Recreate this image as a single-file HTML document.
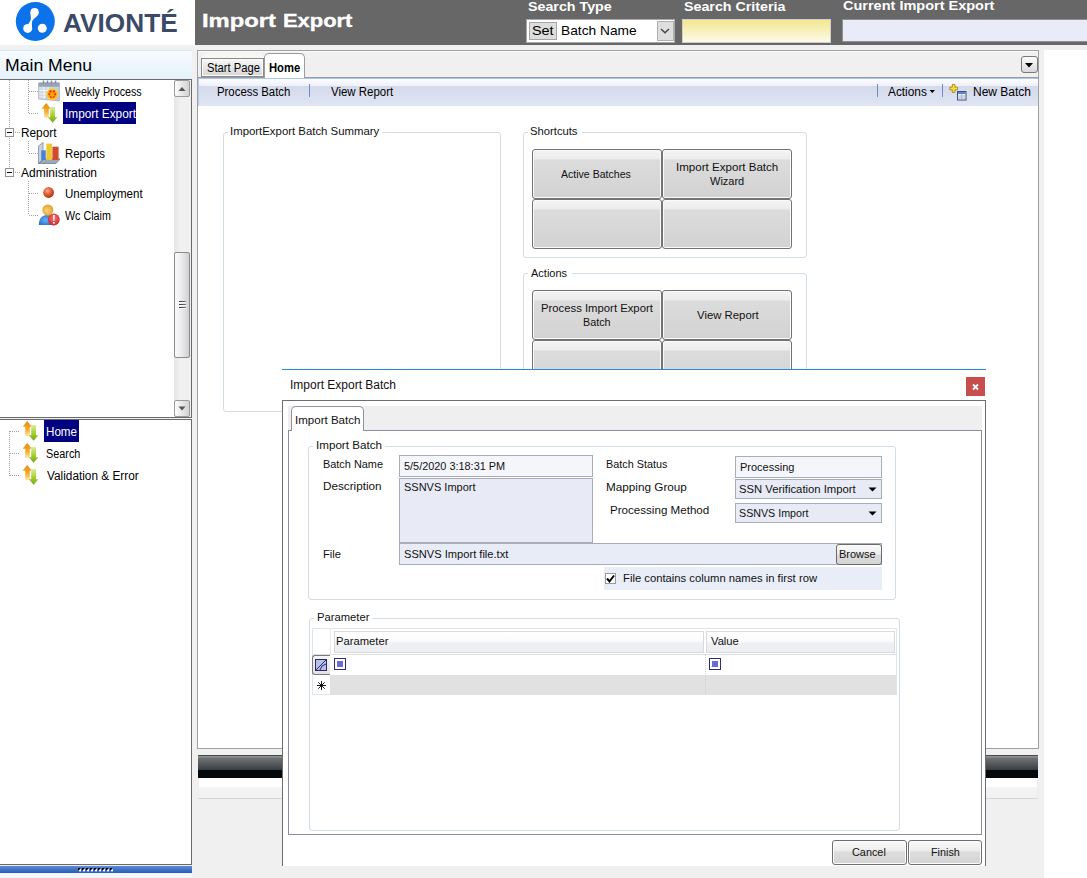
<!DOCTYPE html>
<html><head><meta charset="utf-8"><style>
html,body{margin:0;padding:0}
body{width:1087px;height:878px;overflow:hidden;position:relative;background:#f0f0f0;font-family:"Liberation Sans",sans-serif}
body>div{position:absolute}
.t{white-space:pre}
</style></head><body>
<div style="left:0px;top:0px;width:195px;height:45px;background:#fff"></div>
<div style="left:195px;top:0px;width:892px;height:45px;background:#676767"></div>
<div style="left:1044px;top:50px;width:43px;height:828px;background:#fff"></div>
<svg style="position:absolute;left:0;top:0" width="195" height="45" viewBox="0 0 195 45">
<circle cx="35.3" cy="21.4" r="19.5" fill="#0b72ea"/>
<path d="M30.4,12 C30.4,16 31.2,17.5 30.8,19.5 C30.5,21.5 27.5,23.5 27.7,28.4 L32,27 C31.7,22.5 32,20.5 34,18.8 C36,17.2 38.7,15.5 38.7,12 Z" fill="#fff"/>
<circle cx="34.6" cy="12.1" r="4.1" fill="#fff"/>
<circle cx="27.7" cy="28.4" r="4.5" fill="#fff"/>
<circle cx="42.3" cy="28.2" r="4.5" fill="#fff"/>
</svg>
<div style="left:526px;top:19px;width:149px;height:24px;background:#fff;border:1px solid #a9a9a9;box-sizing:border-box"></div>
<div style="left:529px;top:22px;width:28px;height:18px;background:#dddddd;border:1px solid #a6a6a6;box-sizing:border-box"></div>
<div style="left:657px;top:21px;width:17px;height:20px;background:#dedede;border:1px solid #b0b0b0;box-sizing:border-box"></div>
<svg style="position:absolute;left:657px;top:21px" width="17" height="20"><path d="M4,8 L8,11.8 L12,8" stroke="#444" stroke-width="1.4" fill="none"/></svg>
<div style="left:682px;top:19px;width:149px;height:24px;background:linear-gradient(#f2e68e,#fcfaea);border:1px solid #cfcfcf;box-sizing:border-box"></div>
<div style="left:842px;top:19px;width:245px;height:23px;background:#e9ecf8;border:1px solid #8f8f8f;border-right:none;box-sizing:border-box"></div>
<div style="left:0px;top:50px;width:192px;height:29px;background:linear-gradient(#f7fbfe,#e4f2fb);border-top:1px solid #d2ebf6;box-sizing:border-box"></div>
<div style="left:0px;top:79px;width:192px;height:339px;background:#fff;border-top:1px solid #6a6a6a;border-right:1px solid #6a6a6a;border-bottom:1px solid #6a6a6a;box-sizing:border-box"></div>
<div style="left:174px;top:80px;width:17px;height:337px;background:linear-gradient(90deg,#e6e6e6,#f0f0f0 40%,#f0f0f0)"></div>
<div style="left:174px;top:80px;width:16px;height:17px;background:linear-gradient(90deg,#fdfdfd,#e8e8e8 50%,#d2d2d2);border:1px solid #9a9a9a;border-radius:2px;box-sizing:border-box"></div>
<svg style="position:absolute;left:174px;top:80px" width="16" height="17"><path d="M4.5,11 L8,7 L11.5,11 Z" fill="#555"/></svg>
<div style="left:174px;top:400px;width:16px;height:17px;background:linear-gradient(90deg,#fdfdfd,#e8e8e8 50%,#d2d2d2);border:1px solid #9a9a9a;border-radius:2px;box-sizing:border-box"></div>
<svg style="position:absolute;left:174px;top:400px" width="16" height="17"><path d="M4.5,6.5 L8,10.5 L11.5,6.5 Z" fill="#555"/></svg>
<div style="left:174px;top:252px;width:16px;height:106px;background:linear-gradient(90deg,#fbfbfb,#ececec 45%,#cfd0d4);border:1px solid #8a8a8a;border-radius:2px;box-sizing:border-box"></div>
<div style="left:179px;top:301px;width:7px;height:1px;background:linear-gradient(90deg,#333,#777)"></div>
<div style="left:179px;top:302px;width:7px;height:1px;background:#fafafa"></div>
<div style="left:179px;top:304px;width:7px;height:1px;background:linear-gradient(90deg,#333,#777)"></div>
<div style="left:179px;top:305px;width:7px;height:1px;background:#fafafa"></div>
<div style="left:179px;top:307px;width:7px;height:1px;background:linear-gradient(90deg,#333,#777)"></div>
<div style="left:179px;top:308px;width:7px;height:1px;background:#fafafa"></div>
<div style="left:9px;top:80px;width:1px;height:48px;background:repeating-linear-gradient(#a0a0a0 0 1px,transparent 1px 2px)"></div>
<div style="left:9px;top:138px;width:1px;height:30px;background:repeating-linear-gradient(#a0a0a0 0 1px,transparent 1px 2px)"></div>
<div style="left:28px;top:80px;width:1px;height:33px;background:repeating-linear-gradient(#a0a0a0 0 1px,transparent 1px 2px)"></div>
<div style="left:29px;top:91px;width:9px;height:1px;background:repeating-linear-gradient(90deg,#a0a0a0 0 1px,transparent 1px 2px)"></div>
<div style="left:29px;top:113px;width:9px;height:1px;background:repeating-linear-gradient(90deg,#a0a0a0 0 1px,transparent 1px 2px)"></div>
<div style="left:28px;top:141px;width:1px;height:12px;background:repeating-linear-gradient(#a0a0a0 0 1px,transparent 1px 2px)"></div>
<div style="left:29px;top:153px;width:9px;height:1px;background:repeating-linear-gradient(90deg,#a0a0a0 0 1px,transparent 1px 2px)"></div>
<div style="left:28px;top:181px;width:1px;height:34px;background:repeating-linear-gradient(#a0a0a0 0 1px,transparent 1px 2px)"></div>
<div style="left:29px;top:193px;width:9px;height:1px;background:repeating-linear-gradient(90deg,#a0a0a0 0 1px,transparent 1px 2px)"></div>
<div style="left:29px;top:215px;width:9px;height:1px;background:repeating-linear-gradient(90deg,#a0a0a0 0 1px,transparent 1px 2px)"></div>
<div style="left:5px;top:128px;width:9px;height:9px;background:#fff;border:1px solid #919191;box-sizing:border-box"></div>
<div style="left:7px;top:132px;width:5px;height:1px;background:#000"></div>
<div style="left:15px;top:132px;width:5px;height:1px;background:repeating-linear-gradient(90deg,#a0a0a0 0 1px,transparent 1px 2px)"></div>
<div style="left:5px;top:168px;width:9px;height:9px;background:#fff;border:1px solid #919191;box-sizing:border-box"></div>
<div style="left:7px;top:172px;width:5px;height:1px;background:#000"></div>
<div style="left:15px;top:172px;width:5px;height:1px;background:repeating-linear-gradient(90deg,#a0a0a0 0 1px,transparent 1px 2px)"></div>
<svg style="position:absolute;left:38px;top:80px" width="22" height="22" viewBox="0 0 22 22">
<defs><linearGradient id="cal" x1="0" y1="0" x2="1" y2="1"><stop offset="0" stop-color="#dfe4ea"/><stop offset="1" stop-color="#b4becb"/></linearGradient>
<radialGradient id="sun" cx="0.5" cy="0.5" r="0.5"><stop offset="0" stop-color="#ffb000"/><stop offset="0.6" stop-color="#ff9a10"/><stop offset="1" stop-color="#f8dc20"/></radialGradient></defs>
<path d="M0.5,3 L21.5,3 L21.5,21 L0.5,19 Z" fill="url(#cal)" stroke="#9aa6b6" stroke-width="0.6"/>
<rect x="0.8" y="2.5" width="20.5" height="4.2" fill="#96a3b6"/>
<path d="M5.5,0.5 V4 M9.5,0.5 V4 M13.5,0.5 V4 M17.5,0.5 V4" stroke="#8592a6" stroke-width="1.6"/>
<path d="M1.5,10.5 H13 M1.5,14 H8 M1.5,17 H8 M6,7 V19 M10,7 V10" stroke="#f4f6f9" stroke-width="1"/>
<circle cx="14.3" cy="14.3" r="5.8" fill="url(#sun)"/>
<circle cx="12.5" cy="11.4" r="1.1" fill="#f02808"/><circle cx="15.9" cy="11.4" r="1.1" fill="#f02808"/>
<circle cx="11.3" cy="14.3" r="1.1" fill="#f02808"/><circle cx="17.2" cy="14.3" r="1.1" fill="#f02808"/>
<circle cx="12.8" cy="17" r="1.1" fill="#f84818"/><circle cx="15.7" cy="17" r="1.1" fill="#f84818"/>
</svg>
<svg style="position:absolute;left:41px;top:103px" width="18" height="21" viewBox="0 0 18 21">
<defs><linearGradient id="ga41_103" x1="0" y1="0" x2="0" y2="1"><stop offset="0" stop-color="#e88a10"/><stop offset="0.6" stop-color="#f5b030"/><stop offset="1" stop-color="#fde8b0"/></linearGradient>
<linearGradient id="gb41_103" x1="0" y1="0" x2="0" y2="1"><stop offset="0" stop-color="#d8f0a0"/><stop offset="0.5" stop-color="#a8d030"/><stop offset="1" stop-color="#70a818"/></linearGradient></defs>
<path d="M5.2,0 L9.9,5.8 L7.8,5.8 L7.8,15 L3.2,15 L3.2,5.8 L0.6,5.8 Z" fill="url(#ga41_103)"/>
<path d="M9.2,4 L14,4 L14,14.3 L16.4,14.3 L11.6,19.8 L6.9,14.3 L9.2,14.3 Z" fill="url(#gb41_103)"/>
</svg>
<svg style="position:absolute;left:38px;top:142px" width="22" height="22" viewBox="0 0 22 22">
<path d="M0.5,21.5 L0.5,4 L5,0.5 L5,17 Z" fill="#c8d2de" stroke="#7f8ea3" stroke-width="0.8"/>
<path d="M0.5,21.5 L5,17 L22,17 L18,21.5 Z" fill="#9aa8bb" stroke="#6f7e93" stroke-width="0.8"/>
<rect x="3.2" y="8.3" width="4.6" height="9.7" fill="#4a80d8"/>
<rect x="8.3" y="1.6" width="5.6" height="16.4" fill="#ecc830"/>
<rect x="14.4" y="4.7" width="6.2" height="13.3" fill="#d24a2a"/>
</svg>
<svg style="position:absolute;left:43px;top:187px" width="12" height="12" viewBox="0 0 12 12">
<defs><radialGradient id="ball" cx="0.4" cy="0.35" r="0.7"><stop offset="0" stop-color="#f8b090"/><stop offset="0.5" stop-color="#e05a30"/><stop offset="1" stop-color="#a83010"/></radialGradient></defs>
<circle cx="5.6" cy="5.5" r="5.4" fill="url(#ball)"/>
</svg>
<svg style="position:absolute;left:38px;top:202px" width="24" height="24" viewBox="0 0 24 24">
<defs><radialGradient id="head" cx="0.45" cy="0.55" r="0.6"><stop offset="0" stop-color="#fcd080"/><stop offset="1" stop-color="#e0a020"/></radialGradient>
<radialGradient id="body" cx="0.5" cy="0.5" r="0.6"><stop offset="0" stop-color="#6ab0f8"/><stop offset="1" stop-color="#2a70d0"/></radialGradient>
<radialGradient id="red" cx="0.5" cy="0.4" r="0.6"><stop offset="0" stop-color="#f87878"/><stop offset="1" stop-color="#c82828"/></radialGradient></defs>
<path d="M0.8,23 C0.8,16.5 4,13 9,13 C13.5,13 15,16 15,23 Z" fill="url(#body)"/>
<circle cx="9.8" cy="8" r="5.5" fill="url(#head)"/>
<circle cx="15.8" cy="17.5" r="5.9" fill="url(#red)"/>
<path d="M14.9,13 L16.9,13 L16.3,19 L15.5,19 Z" fill="#fff"/>
<rect x="15.1" y="20" width="1.6" height="1.6" fill="#fff"/>
</svg>
<div style="left:63px;top:102px;width:73px;height:22px;background:#000080"></div>
<div style="left:0px;top:419px;width:192px;height:446px;background:#fff;border-top:1px solid #6a6a6a;border-right:1px solid #6a6a6a;border-bottom:1px solid #6a6a6a;box-sizing:border-box"></div>
<div style="left:9px;top:431px;width:1px;height:45px;background:repeating-linear-gradient(#a0a0a0 0 1px,transparent 1px 2px)"></div>
<div style="left:10px;top:431px;width:10px;height:1px;background:repeating-linear-gradient(90deg,#a0a0a0 0 1px,transparent 1px 2px)"></div>
<div style="left:10px;top:453px;width:10px;height:1px;background:repeating-linear-gradient(90deg,#a0a0a0 0 1px,transparent 1px 2px)"></div>
<div style="left:10px;top:475px;width:10px;height:1px;background:repeating-linear-gradient(90deg,#a0a0a0 0 1px,transparent 1px 2px)"></div>
<svg style="position:absolute;left:22px;top:421px" width="18" height="21" viewBox="0 0 18 21">
<defs><linearGradient id="ga22_421" x1="0" y1="0" x2="0" y2="1"><stop offset="0" stop-color="#e88a10"/><stop offset="0.6" stop-color="#f5b030"/><stop offset="1" stop-color="#fde8b0"/></linearGradient>
<linearGradient id="gb22_421" x1="0" y1="0" x2="0" y2="1"><stop offset="0" stop-color="#d8f0a0"/><stop offset="0.5" stop-color="#a8d030"/><stop offset="1" stop-color="#70a818"/></linearGradient></defs>
<path d="M5.2,0 L9.9,5.8 L7.8,5.8 L7.8,15 L3.2,15 L3.2,5.8 L0.6,5.8 Z" fill="url(#ga22_421)"/>
<path d="M9.2,4 L14,4 L14,14.3 L16.4,14.3 L11.6,19.8 L6.9,14.3 L9.2,14.3 Z" fill="url(#gb22_421)"/>
</svg>
<svg style="position:absolute;left:22px;top:443px" width="18" height="21" viewBox="0 0 18 21">
<defs><linearGradient id="ga22_443" x1="0" y1="0" x2="0" y2="1"><stop offset="0" stop-color="#e88a10"/><stop offset="0.6" stop-color="#f5b030"/><stop offset="1" stop-color="#fde8b0"/></linearGradient>
<linearGradient id="gb22_443" x1="0" y1="0" x2="0" y2="1"><stop offset="0" stop-color="#d8f0a0"/><stop offset="0.5" stop-color="#a8d030"/><stop offset="1" stop-color="#70a818"/></linearGradient></defs>
<path d="M5.2,0 L9.9,5.8 L7.8,5.8 L7.8,15 L3.2,15 L3.2,5.8 L0.6,5.8 Z" fill="url(#ga22_443)"/>
<path d="M9.2,4 L14,4 L14,14.3 L16.4,14.3 L11.6,19.8 L6.9,14.3 L9.2,14.3 Z" fill="url(#gb22_443)"/>
</svg>
<svg style="position:absolute;left:22px;top:465px" width="18" height="21" viewBox="0 0 18 21">
<defs><linearGradient id="ga22_465" x1="0" y1="0" x2="0" y2="1"><stop offset="0" stop-color="#e88a10"/><stop offset="0.6" stop-color="#f5b030"/><stop offset="1" stop-color="#fde8b0"/></linearGradient>
<linearGradient id="gb22_465" x1="0" y1="0" x2="0" y2="1"><stop offset="0" stop-color="#d8f0a0"/><stop offset="0.5" stop-color="#a8d030"/><stop offset="1" stop-color="#70a818"/></linearGradient></defs>
<path d="M5.2,0 L9.9,5.8 L7.8,5.8 L7.8,15 L3.2,15 L3.2,5.8 L0.6,5.8 Z" fill="url(#ga22_465)"/>
<path d="M9.2,4 L14,4 L14,14.3 L16.4,14.3 L11.6,19.8 L6.9,14.3 L9.2,14.3 Z" fill="url(#gb22_465)"/>
</svg>
<div style="left:44px;top:420px;width:35px;height:22px;background:#000080"></div>
<div style="left:0px;top:866px;width:192px;height:7px;background:linear-gradient(#5b8ad6,#2a5bb6)"></div>
<svg style="position:absolute;left:78px;top:868px" width="40" height="4"><path d="M3,0.8 L3,3.2 L0.6,3.2 Z" fill="#fff"/><path d="M0,0 L2.6,0 L0,2.6 Z" fill="#000"/><rect x="0" y="0" width="2" height="2" fill="#000"/><rect x="1.2" y="1.5" width="1.8" height="1.7" fill="#fff"/><path d="M7,0.8 L7,3.2 L4.6,3.2 Z" fill="#fff"/><path d="M4,0 L6.6,0 L4,2.6 Z" fill="#000"/><rect x="4" y="0" width="2" height="2" fill="#000"/><rect x="5.2" y="1.5" width="1.8" height="1.7" fill="#fff"/><path d="M11,0.8 L11,3.2 L8.6,3.2 Z" fill="#fff"/><path d="M8,0 L10.6,0 L8,2.6 Z" fill="#000"/><rect x="8" y="0" width="2" height="2" fill="#000"/><rect x="9.2" y="1.5" width="1.8" height="1.7" fill="#fff"/><path d="M15,0.8 L15,3.2 L12.6,3.2 Z" fill="#fff"/><path d="M12,0 L14.6,0 L12,2.6 Z" fill="#000"/><rect x="12" y="0" width="2" height="2" fill="#000"/><rect x="13.2" y="1.5" width="1.8" height="1.7" fill="#fff"/><path d="M19,0.8 L19,3.2 L16.6,3.2 Z" fill="#fff"/><path d="M16,0 L18.6,0 L16,2.6 Z" fill="#000"/><rect x="16" y="0" width="2" height="2" fill="#000"/><rect x="17.2" y="1.5" width="1.8" height="1.7" fill="#fff"/><path d="M23,0.8 L23,3.2 L20.6,3.2 Z" fill="#fff"/><path d="M20,0 L22.6,0 L20,2.6 Z" fill="#000"/><rect x="20" y="0" width="2" height="2" fill="#000"/><rect x="21.2" y="1.5" width="1.8" height="1.7" fill="#fff"/><path d="M27,0.8 L27,3.2 L24.6,3.2 Z" fill="#fff"/><path d="M24,0 L26.6,0 L24,2.6 Z" fill="#000"/><rect x="24" y="0" width="2" height="2" fill="#000"/><rect x="25.2" y="1.5" width="1.8" height="1.7" fill="#fff"/><path d="M31,0.8 L31,3.2 L28.6,3.2 Z" fill="#fff"/><path d="M28,0 L30.6,0 L28,2.6 Z" fill="#000"/><rect x="28" y="0" width="2" height="2" fill="#000"/><rect x="29.2" y="1.5" width="1.8" height="1.7" fill="#fff"/><path d="M35,0.8 L35,3.2 L32.6,3.2 Z" fill="#fff"/><path d="M32,0 L34.6,0 L32,2.6 Z" fill="#000"/><rect x="32" y="0" width="2" height="2" fill="#000"/><rect x="33.2" y="1.5" width="1.8" height="1.7" fill="#fff"/></svg>
<div style="left:0px;top:873px;width:192px;height:5px;background:#f1f7fc"></div>
<div style="left:197px;top:50px;width:842px;height:699px;background:#f0f0f0;border:1px solid #a0a0a0;box-sizing:border-box"></div>
<div style="left:198px;top:51px;width:840px;height:1px;background:#fbfbfb"></div>
<div style="left:201px;top:53px;width:63px;height:8px;background:#f8f6f3;border-radius:6px 6px 0 0"></div>
<div style="left:201px;top:58px;width:63px;height:19px;background:linear-gradient(#f8f8f8,#d6d6d6);border:1px solid #8a8a8a;box-shadow:inset 0 0 0 1px #fbfbfb;box-sizing:border-box"></div>
<div style="left:198px;top:77px;width:840px;height:1px;background:#9b9b9b"></div>
<div style="left:264px;top:53px;width:41px;height:25px;background:#fff;border:1px solid #9c9c9c;border-bottom:none;border-radius:5px 5px 0 0;box-sizing:border-box"></div>
<div style="left:1021px;top:56px;width:17px;height:17px;background:linear-gradient(#fcfcfc,#d9d9d9);border:1px solid #787878;border-radius:3px;box-sizing:border-box"></div>
<svg style="position:absolute;left:1021px;top:56px" width="17" height="17"><path d="M4,7 L12,7 L8,11.5 Z" fill="#000"/></svg>
<div style="left:198px;top:78px;width:840px;height:28px;background:linear-gradient(#fdfdff 0,#eef0f8 7px,#d5daeb 7px,#e0e5f4 100%);border-top:1px solid #a9c6ee;border-left:1px solid #b4cdf2;box-sizing:border-box"></div>
<div style="left:309px;top:84px;width:1px;height:13px;background:#6d8cc6"></div>
<div style="left:877px;top:84px;width:1px;height:13px;background:#6d8cc6"></div>
<svg style="position:absolute;left:929px;top:89px" width="7" height="5"><path d="M0.5,1 L6,1 L3.25,4 Z" fill="#000"/></svg>
<div style="left:942px;top:84px;width:1px;height:13px;background:#6d8cc6"></div>
<svg style="position:absolute;left:949px;top:84px" width="18" height="17" viewBox="0 0 18 17">
<path d="M3.3,0.5 H5.9 V3.2 H8.5 V5.8 H5.9 V8.4 H3.3 V5.8 H0.8 V3.2 H3.3 Z" fill="#f6e040" stroke="#a88a10" stroke-width="0.9"/>
<rect x="8.5" y="7.5" width="8.5" height="8.5" fill="#f4f6fa" stroke="#3a5080" stroke-width="1"/>
<rect x="9" y="8" width="7.5" height="2" fill="#5a88d0"/>
<path d="M9,12 H16.5 M9,14 H16.5 M12.7,10 V15.5" stroke="#9aa8c0" stroke-width="0.8"/>
</svg>
<div style="left:198px;top:106px;width:840px;height:642px;background:#fff"></div>
<div style="left:223px;top:132px;width:278px;height:280px;border:1px solid #d3dde5;border-radius:3px;box-sizing:border-box"></div>
<div style="left:228px;top:124px;width:154px;height:14px;background:#fff"></div>
<div style="left:523px;top:132px;width:284px;height:126px;border:1px solid #d3dde5;border-radius:3px;box-sizing:border-box"></div>
<div style="left:528px;top:124px;width:54px;height:14px;background:#fff"></div>
<div style="left:532px;top:149px;width:130px;height:50px;background:linear-gradient(#f3f3f3 0,#ececec 9px,#dcdcdc 10px,#d2d2d2 100%);border:1px solid #737373;border-radius:3px;box-shadow:inset 0 0 0 1px #fafafa;box-sizing:border-box"></div>
<div style="left:662px;top:149px;width:130px;height:50px;background:linear-gradient(#f3f3f3 0,#ececec 9px,#dcdcdc 10px,#d2d2d2 100%);border:1px solid #737373;border-radius:3px;box-shadow:inset 0 0 0 1px #fafafa;box-sizing:border-box"></div>
<div style="left:532px;top:199px;width:130px;height:50px;background:linear-gradient(#f3f3f3 0,#ececec 9px,#dcdcdc 10px,#d2d2d2 100%);border:1px solid #737373;border-radius:3px;box-shadow:inset 0 0 0 1px #fafafa;box-sizing:border-box"></div>
<div style="left:662px;top:199px;width:130px;height:50px;background:linear-gradient(#f3f3f3 0,#ececec 9px,#dcdcdc 10px,#d2d2d2 100%);border:1px solid #737373;border-radius:3px;box-shadow:inset 0 0 0 1px #fafafa;box-sizing:border-box"></div>
<div style="left:523px;top:273px;width:284px;height:140px;border:1px solid #d3dde5;border-radius:3px;box-sizing:border-box"></div>
<div style="left:528px;top:265px;width:44px;height:14px;background:#fff"></div>
<div style="left:532px;top:290px;width:130px;height:50px;background:linear-gradient(#f3f3f3 0,#ececec 9px,#dcdcdc 10px,#d2d2d2 100%);border:1px solid #737373;border-radius:3px;box-shadow:inset 0 0 0 1px #fafafa;box-sizing:border-box"></div>
<div style="left:662px;top:290px;width:130px;height:50px;background:linear-gradient(#f3f3f3 0,#ececec 9px,#dcdcdc 10px,#d2d2d2 100%);border:1px solid #737373;border-radius:3px;box-shadow:inset 0 0 0 1px #fafafa;box-sizing:border-box"></div>
<div style="left:532px;top:340px;width:130px;height:50px;background:linear-gradient(#f3f3f3 0,#ececec 9px,#dcdcdc 10px,#d2d2d2 100%);border:1px solid #737373;border-radius:3px;box-shadow:inset 0 0 0 1px #fafafa;box-sizing:border-box"></div>
<div style="left:662px;top:340px;width:130px;height:50px;background:linear-gradient(#f3f3f3 0,#ececec 9px,#dcdcdc 10px,#d2d2d2 100%);border:1px solid #737373;border-radius:3px;box-shadow:inset 0 0 0 1px #fafafa;box-sizing:border-box"></div>
<div style="left:198px;top:755px;width:840px;height:23px;background:linear-gradient(#8e9092 0,#8e9092 1px,#717477 2px,#55585c 8px,#383b3f 14px,#05090e 14px,#05090e);border-top:1px solid #4a4a4a;box-sizing:border-box"></div>
<div style="left:198px;top:778px;width:840px;height:21px;background:linear-gradient(#ffffff 0,#ffffff 9px,#f4f4f4 9px,#f2f2f2);border-bottom:1px solid #d6d6d6;border-left:1px solid #ececec;border-right:1px solid #ececec;box-sizing:border-box"></div>
<div style="left:282px;top:369px;width:704px;height:497px;background:#fff;border-top:1px solid #2a86d6;box-sizing:border-box"></div>
<div style="left:966px;top:377px;width:19px;height:19px;background:#c84d4d"></div>
<svg style="position:absolute;left:966px;top:377px" width="19" height="19"><path d="M7,7.5 L12,12.5 M12,7.5 L7,12.5" stroke="#fff" stroke-width="1.8"/></svg>
<div style="left:282px;top:400px;width:704px;height:466px;border:1px solid #6e6e6e;border-bottom:none;box-sizing:border-box"></div>
<div style="left:288px;top:406px;width:694px;height:24px;background:#efefef"></div>
<div style="left:288px;top:430px;width:694px;height:405px;border:1px solid #8a8d9b;box-sizing:border-box"></div>
<div style="left:291px;top:406px;width:73px;height:25px;background:#fff;border:1px solid #8f919c;border-bottom:none;border-radius:5px 5px 0 0;box-sizing:border-box"></div>
<div style="left:308px;top:446px;width:588px;height:154px;border:1px solid #d3dde5;border-radius:3px;box-sizing:border-box"></div>
<div style="left:313px;top:438px;width:72px;height:14px;background:#fff"></div>
<div style="left:399px;top:455px;width:194px;height:22px;background:#f5f6fb;border:1px solid #a9acba;box-sizing:border-box"></div>
<div style="left:399px;top:478px;width:194px;height:65px;background:#e8ebf5;border:1px solid #a9acba;box-sizing:border-box"></div>
<div style="left:399px;top:543px;width:483px;height:22px;background:#e8ecf6;border:1px solid #a9acba;box-sizing:border-box"></div>
<div style="left:836px;top:544px;width:46px;height:21px;background:linear-gradient(#fcfcfc,#ececec 45%,#dadada 55%,#d6d6d6);border:1px solid #6a6a6a;border-radius:3px;box-sizing:border-box"></div>
<div style="left:735px;top:456px;width:147px;height:22px;background:#f5f6fb;border:1px solid #a9acba;box-sizing:border-box"></div>
<div style="left:735px;top:479px;width:147px;height:20px;background:#e8ebf5;border:1px solid #a9acba;box-sizing:border-box"></div>
<div style="left:735px;top:503px;width:147px;height:20px;background:#e8ebf5;border:1px solid #a9acba;box-sizing:border-box"></div>
<svg style="position:absolute;left:868px;top:487px" width="9" height="5"><path d="M0.5,0.5 L8.5,0.5 L4.5,4.5 Z" fill="#000"/></svg>
<svg style="position:absolute;left:868px;top:511px" width="9" height="5"><path d="M0.5,0.5 L8.5,0.5 L4.5,4.5 Z" fill="#000"/></svg>
<div style="left:604px;top:567px;width:278px;height:23px;background:#e9edf8"></div>
<div style="left:605px;top:573px;width:11px;height:11px;background:#fff;border:1px solid #9a9a9a;box-sizing:border-box"></div>
<svg style="position:absolute;left:605px;top:573px" width="11" height="11"><path d="M2,5.5 L4.5,8.5 L9,2.5" stroke="#000" stroke-width="2" fill="none"/></svg>
<div style="left:309px;top:618px;width:591px;height:213px;border:1px solid #d3dde5;border-radius:3px;box-sizing:border-box"></div>
<div style="left:314px;top:610px;width:58px;height:14px;background:#fff"></div>
<div style="left:312px;top:628px;width:585px;height:67px;border:1px solid #e2e4e8;box-sizing:border-box"></div>
<div style="left:330px;top:629px;width:1px;height:26px;background:#e6e8ea"></div>
<div style="left:334px;top:631px;width:370px;height:22px;background:linear-gradient(#ffffff 0,#fbfbfc 45%,#eef0f3 55%,#eceef1);border:1px solid #d8dadd;box-sizing:border-box"></div>
<div style="left:706px;top:631px;width:189px;height:22px;background:linear-gradient(#ffffff 0,#fbfbfc 45%,#eef0f3 55%,#eceef1);border:1px solid #d8dadd;box-sizing:border-box"></div>
<div style="left:313px;top:654px;width:583px;height:1px;background:#dcdee2"></div>
<div style="left:312px;top:655px;width:18px;height:20px;background:linear-gradient(#f6f6f6,#e2e2e2);border:1px solid #7a7a7a;border-right:none;border-radius:3px 0 0 3px;box-sizing:border-box"></div>
<svg style="position:absolute;left:315px;top:659px" width="12" height="12" viewBox="0 0 12 12">
<rect x="0.5" y="0.5" width="11" height="11" fill="#b8c0e8" stroke="#2a2a6a" stroke-width="1"/>
<path d="M1,11 L11,1 M5,11 Q6,6 11,5" stroke="#2a2a6a" stroke-width="1" fill="none"/>
</svg>
<div style="left:330px;top:675px;width:566px;height:20px;background:#e1e1e1"></div>
<svg style="position:absolute;left:316px;top:680px" width="11" height="11"><path d="M5.5,1 V10 M1,5.5 H10 M2.3,2.3 L8.7,8.7 M8.7,2.3 L2.3,8.7" stroke="#000" stroke-width="0.9"/></svg>
<div style="left:334px;top:658px;width:12px;height:12px;background:#fff;border:1px solid #2f2f6f;box-sizing:border-box"></div>
<div style="left:337px;top:661px;width:6px;height:6px;background:#6b6bd6"></div>
<div style="left:709px;top:658px;width:12px;height:12px;background:#fff;border:1px solid #2f2f6f;box-sizing:border-box"></div>
<div style="left:712px;top:661px;width:6px;height:6px;background:#6b6bd6"></div>
<div style="left:705px;top:655px;width:1px;height:40px;background:repeating-linear-gradient(#cfcfcf 0 1px,transparent 1px 2px)"></div>
<div style="left:832px;top:840px;width:75px;height:25px;background:linear-gradient(#fafafa 0,#eeeeee 40%,#dcdcdc 50%,#d4d4d4 100%);border:1px solid #6f6f6f;border-radius:3px;box-shadow:inset 0 0 0 1px #fbfbfb;box-sizing:border-box"></div>
<div style="left:908px;top:840px;width:74px;height:25px;background:linear-gradient(#fafafa 0,#eeeeee 40%,#dcdcdc 50%,#d4d4d4 100%);border:1px solid #6f6f6f;border-radius:3px;box-shadow:inset 0 0 0 1px #fbfbfb;box-sizing:border-box"></div>
<div class="t" style="left:62.99px;top:10px;font-size:26px;line-height:26px;font-weight:bold;color:#3b4a67;transform:scaleX(1.0089);transform-origin:0 0;">AVIONTÉ</div>
<div class="t" style="left:201.75px;top:11px;font-size:19px;line-height:19px;font-weight:bold;color:#fff;transform:scaleX(1.2500);transform-origin:0 0;-webkit-text-stroke:0.35px #fff;">Import</div>
<div class="t" style="left:282.85px;top:11px;font-size:19px;line-height:19px;font-weight:bold;color:#fff;transform:scaleX(1.1525);transform-origin:0 0;-webkit-text-stroke:0.35px #fff;">Export</div>
<div class="t" style="left:527.81px;top:1px;font-size:12px;line-height:12px;font-weight:bold;color:#fff;transform:scaleX(1.1884);transform-origin:0 0;">Search Type</div>
<div class="t" style="left:683.81px;top:1px;font-size:12px;line-height:12px;font-weight:bold;color:#fff;transform:scaleX(1.1882);transform-origin:0 0;">Search Criteria</div>
<div class="t" style="left:843.00px;top:0px;font-size:12px;line-height:12px;font-weight:bold;color:#fff;transform:scaleX(1.2080);transform-origin:0 0;">Current Import Export</div>
<div class="t" style="left:531.89px;top:24px;font-size:13px;line-height:13px;color:#000;transform:scaleX(1.1053);transform-origin:0 0;">Set</div>
<div class="t" style="left:560.94px;top:24px;font-size:13px;line-height:13px;color:#000;transform:scaleX(1.0571);transform-origin:0 0;">Batch Name</div>
<div class="t" style="left:4.96px;top:57px;font-size:17px;line-height:17px;color:#000;transform:scaleX(1.0366);transform-origin:0 0;">Main Menu</div>
<div class="t" style="left:65.00px;top:86px;font-size:12px;line-height:12px;color:#000;transform:scaleX(0.8941);transform-origin:0 0;">Weekly Process</div>
<div class="t" style="left:65.01px;top:108px;font-size:12px;line-height:12px;color:#fff;transform:scaleX(0.9859);transform-origin:0 0;">Import Export</div>
<div class="t" style="left:21.01px;top:127px;font-size:12px;line-height:12px;color:#000;transform:scaleX(0.9857);transform-origin:0 0;">Report</div>
<div class="t" style="left:65.05px;top:148px;font-size:12px;line-height:12px;color:#000;transform:scaleX(0.9512);transform-origin:0 0;">Reports</div>
<div class="t" style="left:21.00px;top:167px;font-size:12px;line-height:12px;color:#000;">Administration</div>
<div class="t" style="left:65.04px;top:188px;font-size:12px;line-height:12px;color:#000;transform:scaleX(0.9625);transform-origin:0 0;">Unemployment</div>
<div class="t" style="left:65.00px;top:210px;font-size:12px;line-height:12px;color:#000;transform:scaleX(0.8922);transform-origin:0 0;">Wc Claim</div>
<div class="t" style="left:46.03px;top:426px;font-size:12px;line-height:12px;color:#fff;transform:scaleX(0.9677);transform-origin:0 0;">Home</div>
<div class="t" style="left:46.10px;top:448px;font-size:12px;line-height:12px;color:#000;transform:scaleX(0.9028);transform-origin:0 0;">Search</div>
<div class="t" style="left:46.50px;top:470px;font-size:12px;line-height:12px;color:#000;transform:scaleX(0.9839);transform-origin:0 0;">Validation & Error</div>
<div class="t" style="left:207.06px;top:62px;font-size:12px;line-height:12px;color:#000;transform:scaleX(0.9364);transform-origin:0 0;">Start Page</div>
<div class="t" style="left:269.06px;top:62px;font-size:12px;line-height:12px;font-weight:bold;color:#000;transform:scaleX(0.9375);transform-origin:0 0;">Home</div>
<div class="t" style="left:217.05px;top:86px;font-size:12px;line-height:12px;color:#000;transform:scaleX(0.9474);transform-origin:0 0;">Process Batch</div>
<div class="t" style="left:331.00px;top:86px;font-size:12px;line-height:12px;color:#000;transform:scaleX(0.9538);transform-origin:0 0;">View Report</div>
<div class="t" style="left:888.00px;top:86px;font-size:12px;line-height:12px;color:#000;transform:scaleX(0.9872);transform-origin:0 0;">Actions</div>
<div class="t" style="left:973.00px;top:86px;font-size:12px;line-height:12px;color:#000;">New Batch</div>
<div class="t" style="left:229.97px;top:126px;font-size:11px;line-height:11px;color:#111;transform:scaleX(1.0350);transform-origin:0 0;">ImportExport Batch Summary</div>
<div class="t" style="left:529.98px;top:126px;font-size:11px;line-height:11px;color:#111;transform:scaleX(1.0222);transform-origin:0 0;">Shortcuts</div>
<div class="t" style="left:561.00px;top:169px;font-size:11px;line-height:11px;color:#111;transform:scaleX(0.9589);transform-origin:0 0;">Active Batches</div>
<div class="t" style="left:675.95px;top:162px;font-size:11px;line-height:11px;color:#111;transform:scaleX(1.0521);transform-origin:0 0;">Import Export Batch</div>
<div class="t" style="left:710.00px;top:176px;font-size:11px;line-height:11px;color:#111;">Wizard</div>
<div class="t" style="left:531.00px;top:268px;font-size:11px;line-height:11px;color:#111;">Actions</div>
<div class="t" style="left:540.97px;top:303px;font-size:11px;line-height:11px;color:#111;transform:scaleX(1.0278);transform-origin:0 0;">Process Import Export</div>
<div class="t" style="left:583.02px;top:317px;font-size:11px;line-height:11px;color:#111;transform:scaleX(0.9815);transform-origin:0 0;">Batch</div>
<div class="t" style="left:697.00px;top:310px;font-size:11px;line-height:11px;color:#111;transform:scaleX(1.0333);transform-origin:0 0;">View Report</div>
<div class="t" style="left:290.00px;top:379px;font-size:12px;line-height:12px;color:#111;">Import Export Batch</div>
<div class="t" style="left:294.95px;top:415px;font-size:11px;line-height:11px;color:#111;transform:scaleX(1.0492);transform-origin:0 0;">Import Batch</div>
<div class="t" style="left:315.94px;top:440px;font-size:11px;line-height:11px;color:#111;transform:scaleX(1.0574);transform-origin:0 0;">Import Batch</div>
<div class="t" style="left:323.01px;top:459px;font-size:11px;line-height:11px;color:#111;transform:scaleX(0.9915);transform-origin:0 0;">Batch Name</div>
<div class="t" style="left:322.94px;top:481px;font-size:11px;line-height:11px;color:#111;transform:scaleX(1.0648);transform-origin:0 0;">Description</div>
<div class="t" style="left:322.98px;top:549px;font-size:11px;line-height:11px;color:#111;transform:scaleX(1.0188);transform-origin:0 0;">File</div>
<div class="t" style="left:404.01px;top:461px;font-size:11px;line-height:11px;color:#111;transform:scaleX(0.9900);transform-origin:0 0;">5/5/2020 3:18:31 PM</div>
<div class="t" style="left:404.00px;top:482px;font-size:11px;line-height:11px;color:#111;">SSNVS Import</div>
<div class="t" style="left:403.99px;top:549px;font-size:11px;line-height:11px;color:#111;transform:scaleX(1.0098);transform-origin:0 0;">SSNVS Import file.txt</div>
<div class="t" style="left:839.00px;top:549px;font-size:11px;line-height:11px;color:#111;">Browse</div>
<div class="t" style="left:606.02px;top:459px;font-size:11px;line-height:11px;color:#111;transform:scaleX(0.9836);transform-origin:0 0;">Batch Status</div>
<div class="t" style="left:605.93px;top:482px;font-size:11px;line-height:11px;color:#111;transform:scaleX(1.0667);transform-origin:0 0;">Mapping Group</div>
<div class="t" style="left:609.95px;top:505px;font-size:11px;line-height:11px;color:#111;transform:scaleX(1.0538);transform-origin:0 0;">Processing Method</div>
<div class="t" style="left:740.00px;top:462px;font-size:11px;line-height:11px;color:#111;">Processing</div>
<div class="t" style="left:738.97px;top:484px;font-size:11px;line-height:11px;color:#111;transform:scaleX(1.0265);transform-origin:0 0;">SSN Verification Import</div>
<div class="t" style="left:739.03px;top:508px;font-size:11px;line-height:11px;color:#111;transform:scaleX(0.9718);transform-origin:0 0;">SSNVS Import</div>
<div class="t" style="left:622.98px;top:573px;font-size:11px;line-height:11px;color:#111;transform:scaleX(1.0238);transform-origin:0 0;">File contains column names in first row</div>
<div class="t" style="left:316.98px;top:612px;font-size:11px;line-height:11px;color:#111;transform:scaleX(1.0200);transform-origin:0 0;">Parameter</div>
<div class="t" style="left:335.98px;top:636px;font-size:11px;line-height:11px;color:#111;transform:scaleX(1.0200);transform-origin:0 0;">Parameter</div>
<div class="t" style="left:711.00px;top:636px;font-size:11px;line-height:11px;color:#111;transform:scaleX(1.0185);transform-origin:0 0;">Value</div>
<div class="t" style="left:852.01px;top:847px;font-size:11px;line-height:11px;color:#111;transform:scaleX(0.9879);transform-origin:0 0;">Cancel</div>
<div class="t" style="left:931.02px;top:847px;font-size:11px;line-height:11px;color:#111;transform:scaleX(0.9821);transform-origin:0 0;">Finish</div>
</body></html>
